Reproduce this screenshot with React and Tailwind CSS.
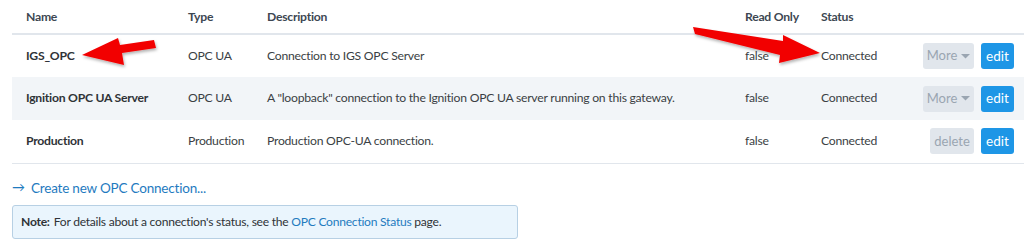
import React from "react";

const rows = [
  { name: "IGS_OPC", type: "OPC UA", desc: "Connection to IGS OPC Server", ro: "false", status: "Connected", more: true },
  { name: "Ignition OPC UA Server", type: "OPC UA", desc: 'A "loopback" connection to the Ignition OPC UA server running on this gateway.', ro: "false", status: "Connected", more: true },
  { name: "Production", type: "Production", desc: "Production OPC-UA connection.", ro: "false", status: "Connected", more: false },
];

function Caret() {
  return (
    <svg width="9" height="5" viewBox="0 0 9 5" className="ml-[4px]">
      <path d="M0 0 L9 0 L4.5 4.5 Z" fill="#9aa5b1" />
    </svg>
  );
}

export default function App() {
  return (
    <div className="relative w-[1024px] h-[242px] bg-white text-[12.2px] tracking-[-0.25px] text-[#3b3f44]" style={{ fontFamily: "Lato, 'Open Sans', sans-serif" }}>
      <div className="pl-3">
        <table className="w-full border-collapse">
          <thead>
            <tr className="h-[34px] border-b-2 border-[#e1e6ec] text-left text-[#3d4752]">
              <th className="pl-[14px] pt-[2px] w-[176px] font-bold">Name</th>
              <th className="w-[79px] pt-[2px] font-bold">Type</th>
              <th className="w-[478px] pt-[2px] font-bold">Description</th>
              <th className="w-[76px] pt-[2px] font-bold">Read Only</th>
              <th className="pt-[2px] font-bold">Status</th>
              <th></th>
            </tr>
          </thead>
          <tbody>
            {rows.map((r, i) => (
              <tr key={r.name} className={`h-[43px] ${i === 1 ? "bg-[#f2f5f8]" : "bg-white"} ${i === 2 ? "border-b border-[#e1e6ec]" : ""}`}>
                <td className="pl-[14px] font-bold text-[#2f3337]">{r.name}</td>
                <td>{r.type}</td>
                <td>{r.desc}</td>
                <td>{r.ro}</td>
                <td>{r.status}</td>
                <td className="pr-[10px]">
                  <div className="flex justify-end gap-[7px] text-[13px] tracking-normal">
                    {r.more ? (
                      <button className="flex items-center justify-center w-[51px] h-[26px] rounded-[3px] bg-[#e1e6ec] text-[#9aa5b1]">
                        More<Caret />
                      </button>
                    ) : (
                      <button className="w-[44px] h-[26px] rounded-[3px] bg-[#e1e6ec] text-[#9aa5b1]">delete</button>
                    )}
                    <button className="w-[33px] h-[26px] rounded-[3px] bg-[#1e96e6] text-white text-[13.5px]">edit</button>
                  </div>
                </td>
              </tr>
            ))}
          </tbody>
        </table>
        <div className="mt-[14px] flex items-center text-[13.5px] tracking-[-0.2px] text-[#1f7bbf]">
          <span className="w-[19px] text-[13px]">→</span>
          <span>Create new OPC Connection...</span>
        </div>
        <div className="mt-[7px] w-[506px] h-[34px] flex items-center pl-2 rounded-[3px] border border-[#b7d0e4] bg-[#eaf5fd] text-[12.1px] tracking-[-0.25px] text-[#2f3337]">
          <span className="font-bold mr-1">Note:</span>
          <span>For details about a connection's status, see the&nbsp;</span>
          <span className="text-[#1f7bbf]">OPC Connection Status</span>
          <span>&nbsp;page.</span>
        </div>
      </div>

      <svg className="absolute left-0 top-0 pointer-events-none" width="1024" height="242">
        <defs>
          <filter id="sh" x="-20%" y="-20%" width="140%" height="140%">
            <feDropShadow dx="1" dy="2" stdDeviation="1.5" floodColor="#000" floodOpacity="0.3" />
          </filter>
        </defs>
        <polygon filter="url(#sh)" fill="#f20000" points="82,55 118,38 120,45 154,40 156,48 122,53 124,65" />
        <polygon filter="url(#sh)" fill="#f20000" points="693,27 783,41 783,35 820,53 779,63 780,55 695,34" />
      </svg>
    </div>
  );
}
